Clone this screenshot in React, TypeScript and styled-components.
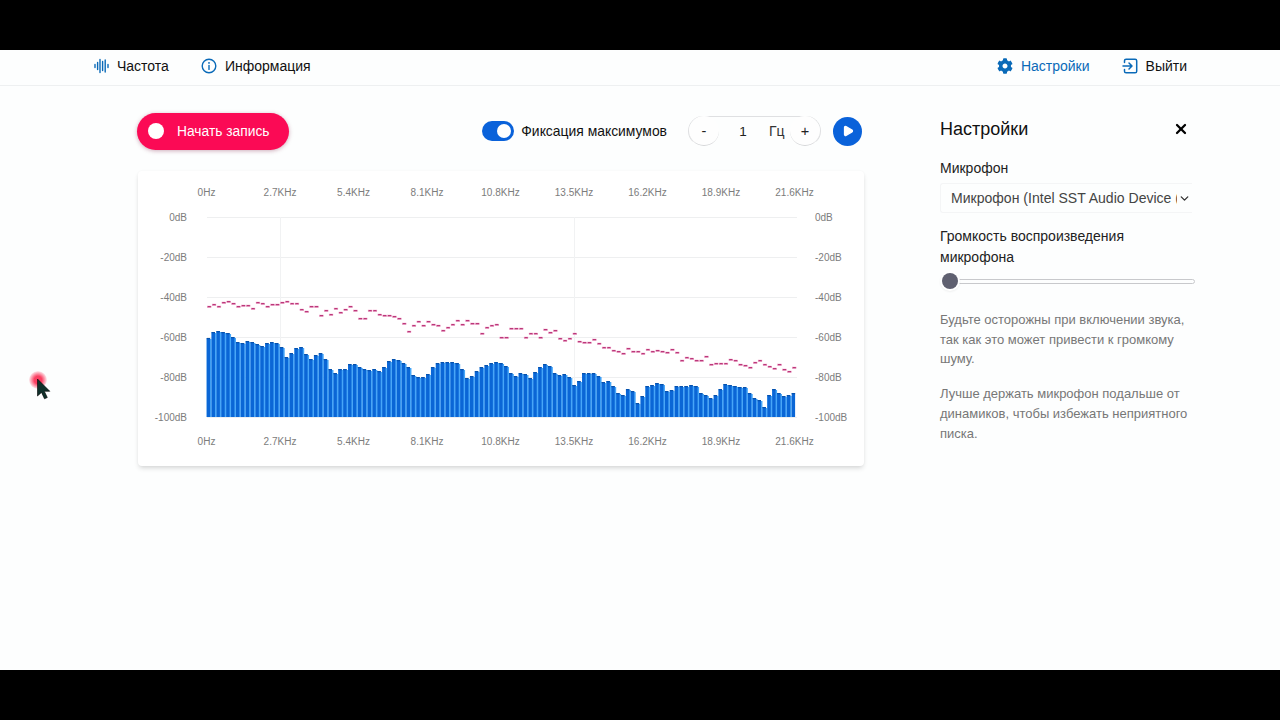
import styled, { createGlobalStyle } from 'styled-components';
import { X, ChevronDown, Play } from 'lucide-react';
import { FaCog } from 'react-icons/fa';

const GlobalStyle = createGlobalStyle`
  html, body {
    margin: 0;
    padding: 0;
    background: #000;
    font-family: "Liberation Sans", Arial, sans-serif;
  }
`;

const barTops = [
  338, 332, 331, 332, 333, 337, 342, 343, 341, 342, 344, 346, 343, 342, 343, 347, 357, 353, 348, 347,
  354, 359, 355, 353, 359, 369, 373, 369, 369, 364, 364, 367, 369, 370,
  369, 371, 367, 361, 359, 360, 363, 367, 375, 377, 377, 374, 367, 363, 362, 362, 362, 363, 369, 378,
  376, 371, 367, 365, 363, 362, 363, 366, 373, 376, 373, 374, 378, 372, 367, 364, 366, 373, 375, 374,
  377, 385, 381, 373, 373, 373,
  376, 382, 381, 386, 393, 395, 389, 391, 403, 396, 386, 385, 383, 384, 391, 390, 386, 386, 386, 385,
  386, 393, 395, 398, 395, 389, 384, 385, 386, 387, 387, 393, 398, 400, 407, 395, 389, 393, 396, 395, 393,
];

const peakTops = [
  306, 304, 306, 302, 301, 303, 306, 305, 305, 308, 302, 303, 306, 304, 304, 302, 301, 303, 303, 309,
  311, 306, 306, 315, 310, 314, 308, 312, 309, 306, 310, 318, 318, 310,
  310, 314, 315, 315, 316, 318, 323, 331, 325, 321, 325, 321, 324, 325, 330, 327, 324, 320, 324, 320,
  323, 323, 333, 327, 325, 324, 337, 337, 328, 328, 328, 337, 333, 333, 337, 329, 332, 330, 338, 340,
  338, 333, 341, 342, 342, 339,
  343, 347, 347, 350, 351, 353, 348, 351, 351, 353, 349, 351, 350, 351, 352, 349, 352, 360, 357, 358,
  360, 360, 356, 364, 363, 363, 363, 359, 360, 364, 365, 367, 362, 360, 364, 366, 368, 364, 369, 371, 367,
];

const freqLabels = ['0Hz', '2.7KHz', '5.4KHz', '8.1KHz', '10.8KHz', '13.5KHz', '16.2KHz', '18.9KHz', '21.6KHz'];
const dbLabels = ['0dB', '-20dB', '-40dB', '-60dB', '-80dB', '-100dB'];

// chart svg starts at page x=138, y=171
const OX = 138;
const OY = 171;
const STEP = 4.875;

const Spectrum = () => (
  <svg width="726" height="295" viewBox="0 0 726 295">
    {dbLabels.map((_, i) => (
      <line key={i} x1={69} x2={659} y1={46.5 + i * 40} y2={46.5 + i * 40} stroke="#eeeff0" />
    ))}
    <line x1={142.5} x2={142.5} y1={46} y2={246} stroke="#f1f2f3" />
    <line x1={436.5} x2={436.5} y1={46} y2={246} stroke="#f1f2f3" />
    {barTops.map((top, i) => (
      <g key={i}>
        {i < barTops.length - 1 && (
          <rect x={206.7 - OX + i * STEP} y={top - OY + 1} width={STEP} height={416 - top} fill="#46a6f8" />
        )}
        <rect x={206.7 - OX + i * STEP} y={top - OY} width={3.4} height={417 - top} fill="#0a66d6" />
        <rect x={206.7 - OX + i * STEP} y={top - OY} width={3.4} height={1.2} fill="#0552ad" />
      </g>
    ))}
    {peakTops.map((top, i) => (
      <rect
        key={i}
        x={207.3 - OX + i * STEP}
        y={top - OY}
        width={3.8}
        height={1.5}
        fill="#a8135f"
        stroke="#f3a6cb"
        strokeWidth={0.5}
      />
    ))}
    {freqLabels.map((label, i) => (
      <g key={label} fill="#7c7c7c" fontSize="10" textAnchor="middle" fontFamily="Liberation Sans, Arial, sans-serif">
        <text x={68.5 + i * 73.5} y={25}>{label}</text>
        <text x={68.5 + i * 73.5} y={274}>{label}</text>
      </g>
    ))}
    {dbLabels.map((label, i) => (
      <g key={label} fill="#7c7c7c" fontSize="10" fontFamily="Liberation Sans, Arial, sans-serif">
        <text x={49} y={50 + i * 40} textAnchor="end">{label}</text>
        <text x={677} y={50 + i * 40}>{label}</text>
      </g>
    ))}
  </svg>
);

const App = () => {
  return (
    <Page>
      <GlobalStyle />
      <Nav>
        <NavGroup>
          <NavItem>
            <svg width="15" height="16" viewBox="0 0 15 16" fill="none" stroke="#0a6ab8" strokeWidth="1.4" strokeLinecap="round">
              <path d="M1 6.5v3M3.6 4.5v7M6 1.5v13M8.6 3.5v9M11.2 2v12M14 6.5v3" />
            </svg>
            Частота
          </NavItem>
          <NavItem>
            <svg width="16" height="16" viewBox="0 0 16 16" fill="none" stroke="#0a6ab8" strokeWidth="1.4" strokeLinecap="round">
              <circle cx="8" cy="8" r="6.8" />
              <path d="M8 7.4v4" />
              <path d="M8 4.8v.1" strokeWidth="1.8" />
            </svg>
            Информация
          </NavItem>
        </NavGroup>
        <NavGroup>
          <NavItem $active>
            <FaCog size={16} color="#0a6ab8" />
            Настройки
          </NavItem>
          <NavItem>
            <svg width="16" height="16" viewBox="0 0 16 16" fill="none" stroke="#0a6ab8" strokeWidth="1.5" strokeLinecap="round" strokeLinejoin="round">
              <path d="M1 8h8.5M7 5l3 3-3 3" />
              <path d="M2.5 4.5V2.8c0-.9.7-1.6 1.6-1.6h9c.9 0 1.6.7 1.6 1.6v10.4c0 .9-.7 1.6-1.6 1.6h-9c-.9 0-1.6-.7-1.6-1.6v-1.7" />
            </svg>
            Выйти
          </NavItem>
        </NavGroup>
      </Nav>
      <Content>
        <Main>
          <Toolbar>
            <RecordButton>
              <RecordDot />
              Начать запись
            </RecordButton>
            <Controls>
              <Toggle>
                <Knob />
              </Toggle>
              <ToggleLabel>Фиксация максимумов</ToggleLabel>
              <Stepper>
                <StepButton>-</StepButton>
                <StepValue>1</StepValue>
                <StepUnit>Гц</StepUnit>
                <StepButton>+</StepButton>
              </Stepper>
              <PlayButton>
                <Play size={12} color="#fff" fill="#fff" strokeWidth={2.5} />
              </PlayButton>
            </Controls>
          </Toolbar>
          <ChartCard>
            <Spectrum />
          </ChartCard>
        </Main>
        <Side>
          <SideHeader>
            <SideTitle>Настройки</SideTitle>
            <X size={16} color="#000" strokeWidth={3.4} />
          </SideHeader>
          <FieldLabel>Микрофон</FieldLabel>
          <Select>
            <SelectText>Микрофон (Intel SST Audio Device (</SelectText>
            <SelectArrow>
              <ChevronDown size={13} color="#333" strokeWidth={2.5} />
            </SelectArrow>
          </Select>
          <VolumeLabel>Громкость воспроизведения микрофона</VolumeLabel>
          <Slider>
            <SliderThumb />
          </Slider>
          <Hint>Будьте осторожны при включении звука, так как это может привести к громкому шуму.</Hint>
          <Hint>Лучше держать микрофон подальше от динамиков, чтобы избежать неприятного писка.</Hint>
        </Side>
      </Content>
      <Pointer>
        <svg width="16" height="22" viewBox="0 0 16 22">
          <path d="M1.5 1v17l4-3.6 3 6.4 2.8-1.3-3-6.2h5.5z" fill="#10302a" stroke="#000" strokeWidth="0.6" />
        </svg>
      </Pointer>
    </Page>
  );
};

export default App;

const Page = styled.div`
  position: relative;
  width: 1280px;
  height: 620px;
  margin-top: 50px;
  background: #fdfefe;
  color: #111;
  overflow: hidden;
  &::before {
    content: '';
  }
`;

const Nav = styled.div`
  height: 36px;
  box-sizing: border-box;
  padding: 0 93px 3px 94px;
  display: flex;
  justify-content: space-between;
  align-items: center;
  border-bottom: 1px solid #eef0f1;
`;

const NavGroup = styled.div`
  display: flex;
  align-items: center;
  gap: 32px;
`;

const NavItem = styled.div<{ $active?: boolean }>`
  display: flex;
  align-items: center;
  gap: 8px;
  font-size: 14px;
  color: ${p => (p.$active ? '#0a6ab8' : '#111')};
`;

const Content = styled.div`
  display: flex;
  padding-left: 137px;
`;

const Main = styled.div`
  width: 727px;
`;

const Toolbar = styled.div`
  display: flex;
  justify-content: space-between;
  align-items: center;
  height: 38px;
  margin-top: 26px;
  padding-right: 2px;
`;

const RecordButton = styled.div`
  width: 152px;
  height: 37px;
  box-sizing: border-box;
  padding-left: 11px;
  display: flex;
  align-items: center;
  gap: 13px;
  border-radius: 19px;
  background: #fb0a55;
  color: #fff;
  font-size: 13.8px;
  box-shadow: 0 1px 4px rgba(120, 20, 60, 0.35);
`;

const RecordDot = styled.span`
  width: 16px;
  height: 16px;
  border-radius: 50%;
  background: #fff;
`;

const Controls = styled.div`
  display: flex;
  align-items: center;
`;

const Toggle = styled.div`
  width: 32px;
  height: 20px;
  box-sizing: border-box;
  padding: 3px;
  display: flex;
  justify-content: flex-end;
  border-radius: 10px;
  background: #0a62da;
`;

const Knob = styled.span`
  width: 14px;
  height: 14px;
  border-radius: 50%;
  background: #fff;
`;

const ToggleLabel = styled.span`
  margin-left: 7px;
  font-size: 13.9px;
  color: #111;
`;

const Stepper = styled.div`
  width: 133px;
  height: 30px;
  box-sizing: border-box;
  margin-left: 21px;
  display: flex;
  align-items: center;
  border: 1px solid #dfe0e2;
  border-bottom-color: transparent;
  border-radius: 15px;
`;

const StepButton = styled.span`
  width: 30px;
  height: 30px;
  flex: none;
  box-sizing: border-box;
  display: flex;
  align-items: center;
  justify-content: center;
  border-radius: 50%;
  background: #fefefe;
  border-bottom: 1px solid #d5d6d8;
  font-size: 14.5px;
  color: #222;
`;

const StepValue = styled.span`
  width: 48px;
  text-align: center;
  font-size: 13.5px;
  color: #222;
`;

const StepUnit = styled.span`
  flex: 1;
  padding-left: 2px;
  font-size: 14px;
  color: #333;
`;

const PlayButton = styled.div`
  width: 29px;
  height: 29px;
  margin-left: 12px;
  display: flex;
  align-items: center;
  justify-content: center;
  border-radius: 50%;
  background: #0a62da;
`;

const ChartCard = styled.div`
  width: 726px;
  height: 295px;
  margin-top: 21px;
  margin-left: 1px;
  border-radius: 4px;
  background: #fff;
  box-shadow: 0 3px 5px -1px rgba(0, 0, 0, 0.16), 0 0 3px rgba(0, 0, 0, 0.03);
`;

const Side = styled.div`
  width: 256px;
  margin-left: 76px;
`;

const SideHeader = styled.div`
  display: flex;
  justify-content: space-between;
  align-items: center;
  margin-top: 32px;
  padding-right: 7px;
`;

const SideTitle = styled.h2`
  margin: 0;
  font-size: 18px;
  font-weight: 400;
  line-height: 22px;
  color: #111;
`;

const FieldLabel = styled.div`
  margin-top: 20px;
  font-size: 14px;
  line-height: 16px;
  color: #222;
`;

const Select = styled.div`
  position: relative;
  width: 252px;
  height: 30px;
  box-sizing: border-box;
  margin-top: 7px;
  padding-left: 10px;
  display: flex;
  align-items: center;
  border: 1px solid #f4f5f6;
  border-right: none;
  border-radius: 3px 0 0 3px;
  overflow: hidden;
`;

const SelectText = styled.span`
  font-size: 14.05px;
  color: #444;
  white-space: nowrap;
`;

const SelectArrow = styled.span`
  position: absolute;
  top: 0;
  right: 0;
  width: 15px;
  height: 28px;
  display: flex;
  align-items: center;
  justify-content: center;
  background: #fdfefe;
`;

const VolumeLabel = styled.div`
  margin-top: 13px;
  font-size: 14px;
  line-height: 21px;
  color: #222;
`;

const Slider = styled.div`
  position: relative;
  width: 245px;
  height: 5px;
  box-sizing: border-box;
  margin: 11px 0 0 10px;
  border: 1px solid #c8c9cc;
  border-radius: 3px;
`;

const SliderThumb = styled.span`
  position: absolute;
  top: -7px;
  left: -9px;
  width: 16px;
  height: 16px;
  border-radius: 50%;
  background: #5f6070;
  box-shadow: 0 0 0 2px #fff, 0 1px 2px 2px rgba(0, 0, 0, 0.06);
`;

const Hint = styled.p`
  margin: 26px 0 0;
  font-size: 13px;
  line-height: 19.7px;
  color: #777;
  & + & {
    margin-top: 15px;
  }
`;

const Pointer = styled.div`
  position: absolute;
  left: 36px;
  top: 328px;
  width: 16px;
  height: 22px;
  &::before {
    content: '';
    position: absolute;
    left: -7px;
    top: -7px;
    width: 18px;
    height: 18px;
    border-radius: 50%;
    background: radial-gradient(circle, rgba(250, 30, 70, 0.85) 30%, rgba(250, 60, 90, 0) 75%);
  }
  svg {
    position: relative;
    display: block;
  }
`;
